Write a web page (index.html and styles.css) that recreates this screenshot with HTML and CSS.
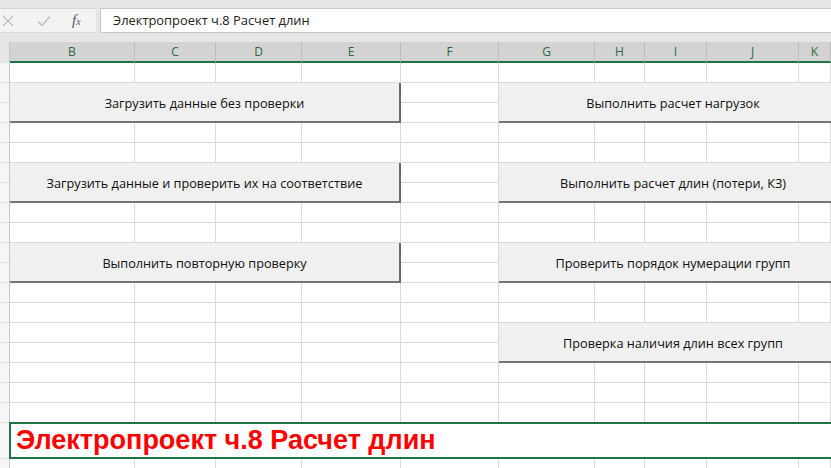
FILE: index.html
```html
<!DOCTYPE html>
<html lang="ru">
<head>
	<meta charset="UTF-8">
	<title>Электропроект ч.8</title>
	<link rel="stylesheet" href="styles.css">
</head>
<body>
	<!--строка формул-->
	<div class="formula-bar">
		<div class="fx-tools">
			<svg class="ico" width="16" height="16" viewBox="0 0 16 16"><path d="M3 3L13 13M13 3L3 13" stroke="#bdbdbd" stroke-width="1.3" fill="none"/></svg>
			<svg class="ico" width="16" height="16" viewBox="0 0 16 16"><path d="M2 8.5L6 12.5L14 3.5" stroke="#bdbdbd" stroke-width="1.5" fill="none"/></svg>
			<span class="fx">f<span class="fx-x">x</span></span>
		</div>
		<div class="formula-input">Электропроект ч.8 Расчет длин</div>
	</div>

	<!--заголовки столбцов-->
	<div class="col-heads">
		<div class="corner"></div>
		<div class="head">B</div>
		<div class="head">C</div>
		<div class="head">D</div>
		<div class="head">E</div>
		<div class="head">F</div>
		<div class="head">G</div>
		<div class="head">H</div>
		<div class="head">I</div>
		<div class="head">J</div>
		<div class="head">K</div>
	</div>

	<!--лист с кнопками-->
	<div class="sheet">
		<div class="gridlines">
			<div class="col rowhead"></div>
			<div class="col"></div>
			<div class="col"></div>
			<div class="col"></div>
			<div class="col"></div>
			<div class="col"></div>
			<div class="col"></div>
			<div class="col"></div>
			<div class="col"></div>
			<div class="col"></div>
			<div class="col"></div>
		</div>

		<div class="btn left b1">Загрузить данные без проверки</div>
		<div class="btn left b2">Загрузить данные и проверить их на соответствие</div>
		<div class="btn left b3">Выполнить повторную проверку</div>

		<div class="btn right b1">Выполнить расчет нагрузок</div>
		<div class="btn right b2">Выполнить расчет длин (потери, КЗ)</div>
		<div class="btn right b3">Проверить порядок нумерации групп</div>
		<div class="btn right b4">Проверка наличия длин всех групп</div>

		<div class="title-cell">Электропроект ч.8 Расчет длин</div>
	</div>
</body>
</html>
```
FILE: styles.css
```css
*{
	margin:0;
	padding:0;
	box-sizing:border-box;
}
html,body{
	width:831px;
	height:468px;
	overflow:hidden;
	background:#fff;
	font-family:"Open Sans","Noto Sans",sans-serif;
}

/* строка формул */
.formula-bar{
	height:42px;
	background:#e6e6e6;
	padding-top:8px;
	display:flex;
	align-items:flex-start;
}
.fx-tools{
	width:96px;
	height:25px;
	background:#f3f3f3;
	border-top:1px solid #d6d6d6;
	border-bottom:1px solid #d6d6d6;
	display:flex;
	align-items:center;
}
.ico{
	display:block;
}
.fx-tools .ico + .ico{
	margin-left:20px;
}
.fx{
	margin-left:20px;
	font-family:"Liberation Serif",serif;
	font-style:italic;
	font-size:15px;
	color:#555;
	line-height:1;
}
.fx-x{
	font-size:10px;
}
.formula-input{
	margin-left:4px;
	flex:1;
	height:25px;
	background:#fff;
	border:1px solid #c6c6c6;
	border-right:0;
	font-size:12.9px;
	line-height:23px;
	padding-left:12px;
	color:#222;
}

/* столбцы */
.col-heads,
.sheet,
.gridlines{
	display:grid;
	grid-template-columns:10px 125px 81px 86px 99px 98px 96px 50px 62px 92px 1fr;
}
.col-heads{
	height:21px;
	background:#e6e6e6;
}
.corner{
	background:#e6e6e6;
	border-right:1px solid #c4c4c4;
}
.head{
	background:#d3d3d3;
	border-right:1px solid #bcbcbc;
	border-bottom:2px solid #217346;
	color:#2d6a44;
	font-size:12px;
	line-height:19px;
	text-align:center;
}

/* лист */
.sheet{
	grid-template-rows:repeat(18,20px) 36px 20px;
	background:
		repeating-linear-gradient(to bottom,transparent 0 19px,#dadada 19px 20px) 0 0/100% 360px no-repeat,
		linear-gradient(#dadada,#dadada) 0 395px/100% 1px no-repeat,
		linear-gradient(#dadada,#dadada) 0 415px/100% 1px no-repeat;
}
.gridlines{
	grid-area:1/1/-1/-1;
}
.col{
	border-right:1px solid #dadada;
}
.col.rowhead{
	background:rgba(230,230,230,0.35);
	border-right:1px solid #c8c8c8;
}

/* кнопки макросов */
.btn{
	position:relative;
	z-index:1;
	background:#f0f0f0;
	border-right:2px solid #6a6a6a;
	border-bottom:2px solid #767676;
	display:flex;
	align-items:center;
	justify-content:center;
	font-size:12.7px;
	color:#111;
	padding-top:1px;
}
.btn.left{
	grid-column:2/span 4;
}
/* правые кнопки уходят за край окна */
.btn.right{
	grid-column:7/-1;
	margin-right:-16px;
	border-right:0;
}
.b1{grid-row:2/span 2;}
.b2{grid-row:6/span 2;}
.b3{grid-row:10/span 2;}
.b4{grid-row:14/span 2;}

/* ячейка с названием */
.title-cell{
	position:relative;
	z-index:1;
	grid-row:19;
	grid-column:2/-1;
	margin-left:-1px;
	margin-top:-1px;
	border:2px solid #217346;
	border-right:0;
	background:#fff;
	font-family:"Liberation Sans",Arial,sans-serif;
	font-weight:bold;
	font-size:27px;
	color:#ff0000;
	line-height:32px;
	padding-left:5px;
}
```
